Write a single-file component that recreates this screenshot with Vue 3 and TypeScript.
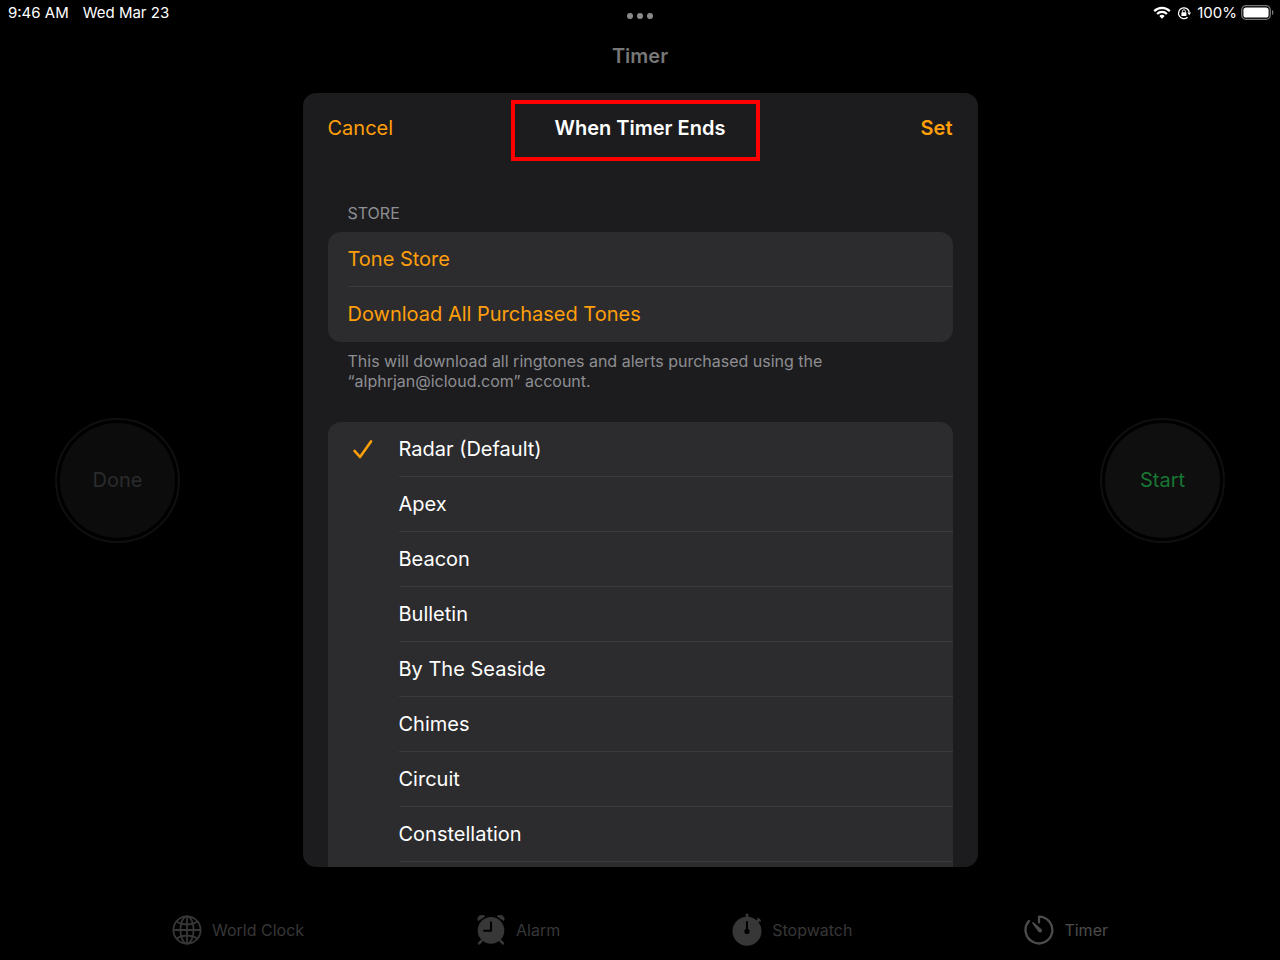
<script setup lang="ts">
import { ref } from 'vue'

const tones: string[] = [
  'Radar (Default)',
  'Apex',
  'Beacon',
  'Bulletin',
  'By The Seaside',
  'Chimes',
  'Circuit',
  'Constellation',
]
const selected = ref<string>(tones[0])
</script>

<template>
  <div class="screen">
    <header class="top">
      <div class="status">
        <div class="status-side">
          <span>9:46 AM</span>
          <span>Wed Mar 23</span>
        </div>
        <div class="status-side right">
          <svg class="wifi" viewBox="0 0 18 13" aria-hidden="true">
            <g fill="none" stroke="#fff" stroke-width="2.2">
              <path d="M1.2 5.1a11 11 0 0 1 15.6 0" />
              <path d="M4.1 8a6.9 6.9 0 0 1 9.8 0" />
            </g>
            <path d="M9 12.8 6.3 10a3.8 3.8 0 0 1 5.4 0z" fill="#fff" />
          </svg>
          <svg class="lock" viewBox="0 0 14 14" aria-hidden="true">
            <path d="M10.6 11.2A5.4 5.4 0 1 1 12.3 6.6" fill="none" stroke="#fff" stroke-width="1.3" />
            <path d="M10.4 6.4h3.6l-1.8 2.8z" fill="#fff" />
            <rect x="4.4" y="6.2" width="5" height="3.8" rx="0.6" fill="#fff" />
            <path d="M5.4 6.4V5.3a1.5 1.5 0 0 1 3 0v1.1" fill="none" stroke="#fff" stroke-width="1" />
          </svg>
          <span class="percent">100%</span>
          <svg class="battery" viewBox="0 0 33 15" aria-hidden="true">
            <rect x="0.7" y="0.7" width="28.6" height="13.6" rx="4.3" fill="none" stroke="#777" stroke-width="1.3" />
            <rect x="2.4" y="2.4" width="25.2" height="10.2" rx="2.7" fill="#fff" />
            <path d="M31 5c1.9.6 1.9 4.4 0 5z" fill="#777" />
          </svg>
        </div>
      </div>
      <button class="dots" type="button" aria-label="Multitasking">
        <i></i><i></i><i></i>
      </button>
      <h1 class="page-title">Timer</h1>
    </header>

    <main class="timer">
      <button class="round" type="button">Done</button>
      <button class="round start" type="button">Start</button>
    </main>

    <nav class="tabs">
      <a class="tab" href="#world">
        <svg viewBox="0 0 30 30" fill="none" stroke="currentColor" stroke-width="1.8" aria-hidden="true">
          <circle cx="15" cy="15" r="13.6" />
          <ellipse cx="15" cy="15" rx="6.6" ry="13.6" />
          <path d="M15 1.4v27.2M1.4 15h27.2M4.6 6.8c6 3.6 14.8 3.6 20.8 0M4.6 23.2c6-3.6 14.8-3.6 20.8 0" />
        </svg>
        <span>World Clock</span>
      </a>
      <a class="tab" href="#alarm">
        <svg viewBox="0 0 30 30" aria-hidden="true">
          <path d="M2.2 5.6C.8 1.4 5-1.4 8.8 1.2zM27.8 5.6c1.4-4.2-2.8-7-6.6-4.4z" fill="currentColor" stroke="currentColor" stroke-width="1" stroke-linejoin="round" />
          <path d="M6 25.4 3 28.4M24 25.4l3 3" stroke="currentColor" stroke-width="2.2" stroke-linecap="round" />
          <circle cx="15" cy="15.4" r="14.2" fill="#000" />
          <path d="M6 25.4 3 28.4M24 25.4l3 3" stroke="currentColor" stroke-width="2.2" stroke-linecap="round" />
          <circle cx="15" cy="15.4" r="13.3" fill="currentColor" />
          <path d="M15 7.2v8.6H8" fill="none" stroke="#000" stroke-width="2" stroke-linecap="round" stroke-linejoin="round" />
        </svg>
        <span>Alarm</span>
      </a>
      <a class="tab" href="#stopwatch">
        <svg class="tall" viewBox="0 0 30 34" aria-hidden="true">
          <circle cx="15" cy="18.2" r="14.5" fill="currentColor" />
          <path d="M15 2v3M24.6 9.4l2.2-2.6" stroke="currentColor" stroke-width="2.8" stroke-linecap="round" />
          <path d="m26 6 2 1.8" stroke="currentColor" stroke-width="2" stroke-linecap="round" />
          <path d="M15 9v8" stroke="#000" stroke-width="2" stroke-linecap="round" />
          <circle cx="15" cy="18.4" r="2.6" fill="#000" />
        </svg>
        <span>Stopwatch</span>
      </a>
      <a class="tab current" href="#timer" aria-current="page">
        <svg viewBox="0 0 30 30" aria-hidden="true">
          <path d="M15 7.4V1.6A13.4 13.4 0 1 1 5 6" fill="none" stroke="currentColor" stroke-width="2.3" stroke-linecap="round" stroke-linejoin="round" />
          <path d="M8.4 8.4c-.6-.8.3-1.7 1.1-1.1l7.8 6.6c2.2 2.2-.8 5-2.9 2.9z" fill="currentColor" />
        </svg>
        <span>Timer</span>
      </a>
    </nav>

    <div class="overlay">
      <section class="sheet" role="dialog" aria-labelledby="sheet-title">
        <header class="sheet-head">
          <button class="action" type="button">Cancel</button>
          <h2 id="sheet-title" class="sheet-title">When Timer Ends</h2>
          <button class="action strong" type="button">Set</button>
        </header>

        <div class="sheet-body">
          <h3 class="label">STORE</h3>
          <div class="group">
            <button class="row link" type="button">Tone Store</button>
            <button class="row link" type="button">Download All Purchased Tones</button>
          </div>
          <p class="note">
            This will download all ringtones and alerts purchased using the “alphrjan@icloud.com” account.
          </p>
          <div class="group tones" role="radiogroup" aria-labelledby="sheet-title">
            <label v-for="tone in tones" :key="tone" class="tone">
              <input v-model="selected" class="radio" type="radio" name="tone" :value="tone" />
              <span class="mark">
                <svg v-if="selected === tone" viewBox="0 0 20 20" aria-hidden="true">
                  <path d="M1.6 10.9 7 17 18 1.4" fill="none" stroke="#ff9f0a" stroke-width="2.6" stroke-linecap="round" stroke-linejoin="round" />
                </svg>
              </span>
              <span class="row">{{ tone }}</span>
            </label>
          </div>
        </div>
      </section>
    </div>
  </div>
</template>

<style>
body {
  margin: 0;
  background: #000;
}
</style>

<style scoped>
.screen {
  position: relative;
  display: flex;
  flex-direction: column;
  min-height: 100vh;
  background: #000;
  color: #fff;
  font-family: Inter, "Liberation Sans", sans-serif;
  font-size: 20px;
  line-height: 26px;
}
button {
  margin: 0;
  padding: 0;
  border: 0;
  background: none;
  color: inherit;
  font: inherit;
  cursor: pointer;
}
h1, h2, h3, p {
  margin: 0;
}
.top {
  position: relative;
  box-sizing: border-box;
  height: 80px;
}
.status {
  display: flex;
  justify-content: space-between;
  align-items: center;
  height: 25px;
  padding: 0 2px 0 8px;
  font-size: 15px;
  line-height: 25px;
}
.status-side {
  display: flex;
  align-items: center;
  gap: 14px;
}
.status-side.right {
  gap: 4px;
}
.wifi {
  width: 18px;
  height: 13px;
  margin-right: 2px;
}
.lock {
  width: 14px;
  height: 14px;
  margin-right: 2px;
}
.battery {
  width: 33px;
  height: 15px;
  margin-right: 4px;
}
.dots {
  position: absolute;
  top: 10px;
  left: 0;
  right: 0;
  display: flex;
  justify-content: center;
  gap: 4px;
  width: 34px;
  height: 12px;
  margin: 0 auto;
  align-items: center;
}
.dots i {
  width: 6px;
  height: 6px;
  border-radius: 50%;
  background: #8a8a8a;
}
.page-title {
  padding-top: 18px;
  text-align: center;
  color: #777;
  font-size: 20px;
  font-weight: 600;
  line-height: 26px;
}
.timer {
  flex: 1;
  display: flex;
  justify-content: space-between;
  align-items: center;
  padding: 0 55px;
}
.round {
  box-sizing: border-box;
  width: 125px;
  height: 125px;
  padding: 3px;
  border: 2px solid #0f0f0f;
  border-radius: 50%;
  background: #0c0c0c content-box;
  color: #2b2b2c;
}
.round.start {
  background-color: #0f0f0f;
  color: #187632;
}
.tabs {
  display: flex;
  justify-content: space-evenly;
  align-items: center;
  height: 60px;
  padding-top: 20px;
  color: #373737;
  font-size: 16px;
}
.tab {
  display: flex;
  align-items: center;
  gap: 10px;
  color: inherit;
  text-decoration: none;
}
.tab.current {
  color: #4c4c4c;
}
.tab svg {
  width: 30px;
  height: 30px;
}
.tab svg.tall {
  height: 34px;
}
.overlay {
  position: absolute;
  inset: 93px 24px;
  display: flex;
  justify-content: center;
}
.sheet {
  display: flex;
  flex-direction: column;
  width: 100%;
  max-width: 675px;
  border-radius: 13px;
  background: #1c1c1e;
  overflow: hidden;
}
.sheet-head {
  display: grid;
  grid-template-columns: 1fr auto 1fr;
  align-items: center;
  height: 70px;
  padding: 0 25px;
}
.action {
  justify-self: start;
  color: #ff9f0a;
}
.action.strong {
  justify-self: end;
  font-weight: 600;
}
.sheet-title {
  position: relative;
  font-size: 20px;
  font-weight: 600;
}
.sheet-title::after {
  content: "";
  position: absolute;
  inset: -15px -35px -20px -44px;
  border: 4px solid #f00;
}
.sheet-body {
  flex: 1;
  display: flex;
  flex-direction: column;
  padding: 40px 25px 0;
}
.label {
  padding: 0 20px 9px;
  color: #8e8e93;
  font-size: 16px;
  font-weight: 400;
  line-height: 20px;
}
.group {
  display: flex;
  flex-direction: column;
  border-radius: 13px;
  background: #2c2c2e;
}
.row {
  box-sizing: border-box;
  height: 55px;
  line-height: 54px;
  border-bottom: 1px solid #3a3a3c;
  text-align: left;
}
.group > .row {
  margin-left: 20px;
}
.group > .row:last-child {
  border-bottom-color: transparent;
}
.link {
  color: #ff9f0a;
}
.note {
  padding: 9px 100px 31px 20px;
  color: #8e8e93;
  font-size: 16px;
  line-height: 20px;
}
.tones {
  flex: 1;
  border-radius: 13px 13px 0 0;
}
.tone {
  position: relative;
  display: flex;
  align-items: center;
  cursor: pointer;
}
.tone .row {
  flex: 1;
}
.radio {
  position: absolute;
  opacity: 0;
  margin: 0;
}
.mark {
  display: flex;
  justify-content: center;
  width: 71px;
}
.mark svg {
  width: 20px;
  height: 20px;
}
</style>
